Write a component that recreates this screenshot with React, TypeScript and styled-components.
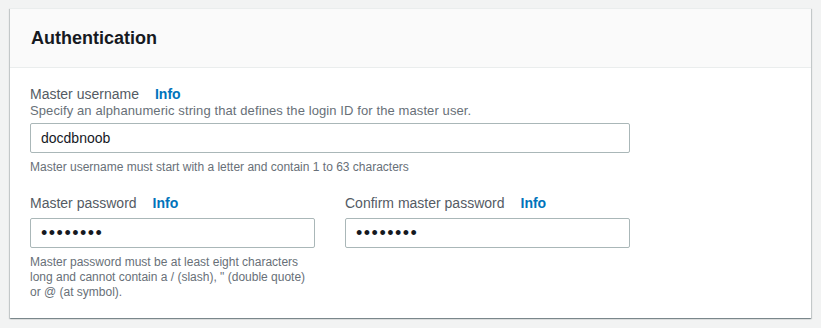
import styled, { createGlobalStyle } from "styled-components";

const GlobalStyle = createGlobalStyle`
  html, body {
    margin: 0;
    padding: 0;
    background: #f2f3f3;
    font-family: "Liberation Sans", Arial, sans-serif;
    color: #16191f;
  }
`;

const Page = styled.div`
  padding: 8px 10px 10px 10px;
`;

const Card = styled.section`
  background: #ffffff;
  border-top: 1px solid #eaeded;
  box-shadow: 0 1px 1px 0 rgba(0, 28, 36, 0.3), 1px 1px 1px 0 rgba(0, 28, 36, 0.15),
    -1px 1px 1px 0 rgba(0, 28, 36, 0.15);
`;

const Header = styled.header`
  background: #fafafa;
  border-bottom: 1px solid #eaeded;
  height: 58px;
  padding: 0 21px;
  display: flex;
  align-items: center;
`;

const Title = styled.h2`
  margin: 0;
  font-size: 18px;
  font-weight: 700;
  color: #16191f;
`;

const Body = styled.div`
  padding: 17px 20px 18px 20px;
  display: flex;
  flex-direction: column;
  gap: 19px;
`;

const Row = styled.div<{ $cols: number }>`
  display: grid;
  grid-template-columns: ${(p) => (p.$cols === 2 ? "285px 285px" : "600px")};
  column-gap: 30px;
`;

const Field = styled.div`
  display: flex;
  flex-direction: column;
`;

const Label = styled.label`
  font-size: 14px;
  line-height: 18px;
  color: #545b64;
  display: flex;
  gap: 16px;
`;

const Info = styled.a`
  font-weight: 700;
  color: #0073bb;
  text-decoration: none;
`;

const Description = styled.div`
  font-size: 13px;
  line-height: 16px;
  letter-spacing: 0.1px;
  color: #687078;
`;

const Input = styled.input<{ $top: number; $secret?: boolean }>`
  box-sizing: border-box;
  margin-top: ${(p) => p.$top}px;
  width: 100%;
  height: 30px;
  padding: 0 10px;
  border: 1px solid #aab7b8;
  border-radius: 2px;
  font-family: "Liberation Sans", Arial, sans-serif;
  font-size: ${(p) => (p.$secret ? "18px" : "14px")};
  letter-spacing: ${(p) => (p.$secret ? "1.5px" : "0")};
  color: #16191f;
  background: #ffffff;
  outline: none;
`;

const Hint = styled.div`
  margin-top: 7px;
  font-size: 12px;
  line-height: 15px;
  color: #687078;
`;

export default function App() {
  return (
    <Page>
      <GlobalStyle />
      <Card>
        <Header>
          <Title>Authentication</Title>
        </Header>
        <Body>
          <Row $cols={1}>
            <Field>
              <Label>
                Master username <Info href="#">Info</Info>
              </Label>
              <Description>
                Specify an alphanumeric string that defines the login ID for the master user.
              </Description>
              <Input $top={4} type="text" defaultValue="docdbnoob" />
              <Hint>Master username must start with a letter and contain 1 to 63 characters</Hint>
            </Field>
          </Row>
          <Row $cols={2}>
            <Field>
              <Label>
                Master password <Info href="#">Info</Info>
              </Label>
              <Input $top={6} $secret type="password" defaultValue="password" />
              <Hint>
                Master password must be at least eight characters long and cannot contain a /
                (slash), " (double quote) or @ (at symbol).
              </Hint>
            </Field>
            <Field>
              <Label>
                Confirm master password <Info href="#">Info</Info>
              </Label>
              <Input $top={6} $secret type="password" defaultValue="password" />
            </Field>
          </Row>
        </Body>
      </Card>
    </Page>
  );
}
